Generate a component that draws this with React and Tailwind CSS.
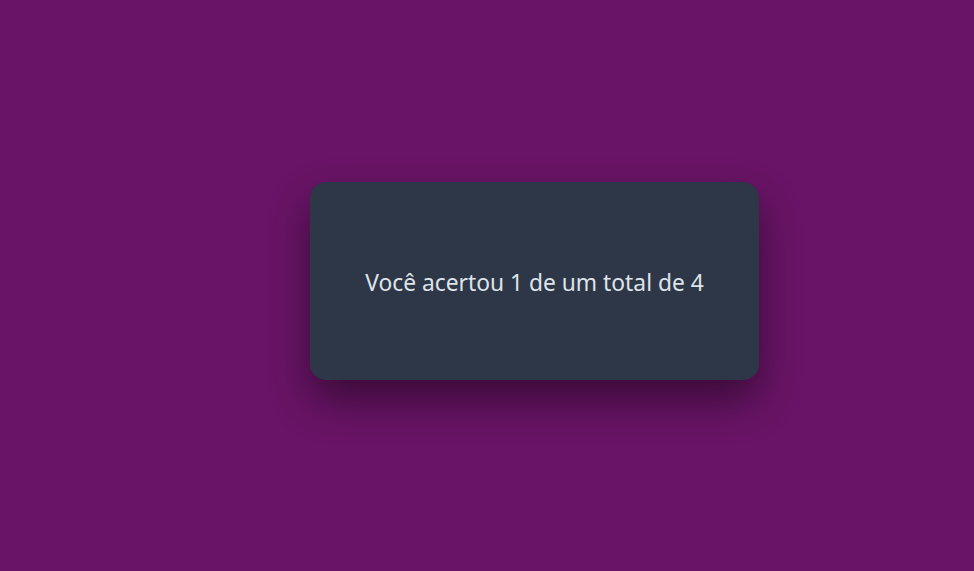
export default function App() {
  return (
    <div className="min-h-screen w-full bg-[#691466] flex items-center justify-center pl-[95px] pb-[9px] font-['Noto_Sans','Open_Sans',sans-serif]">
      <div className="w-[449px] h-[198px] bg-[#2d3748] rounded-2xl shadow-[0_20px_40px_rgba(0,0,0,0.45)] flex items-center justify-center">
        <p className="text-[#dfe3ea] text-[22.8px] leading-none pt-[5px]">Você acertou 1 de um total de 4</p>
      </div>
    </div>
  );
}
